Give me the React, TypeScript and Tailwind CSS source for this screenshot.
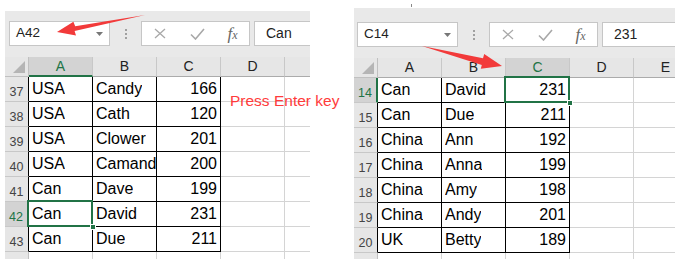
import React from 'react';

type Sheet = {
  name: string;
  value: string;
  cols: string[];
  activeCol: number;
  rows: { n: number; cells: string[] }[];
  activeRow: number;
};

const left: Sheet = {
  name: 'A42',
  value: 'Can',
  cols: ['A', 'B', 'C', 'D', ''],
  activeCol: 0,
  activeRow: 42,
  rows: [
    { n: 37, cells: ['USA', 'Candy', '166'] },
    { n: 38, cells: ['USA', 'Cath', '120'] },
    { n: 39, cells: ['USA', 'Clower', '201'] },
    { n: 40, cells: ['USA', 'Camanda', '200'] },
    { n: 41, cells: ['Can', 'Dave', '199'] },
    { n: 42, cells: ['Can', 'David', '231'] },
    { n: 43, cells: ['Can', 'Due', '211'] },
    { n: 0, cells: [] },
  ],
};

const right: Sheet = {
  name: 'C14',
  value: '231',
  cols: ['A', 'B', 'C', 'D', 'E'],
  activeCol: 2,
  activeRow: 14,
  rows: [
    { n: 14, cells: ['Can', 'David', '231'] },
    { n: 15, cells: ['Can', 'Due', '211'] },
    { n: 16, cells: ['China', 'Ann', '192'] },
    { n: 17, cells: ['China', 'Anna', '199'] },
    { n: 18, cells: ['China', 'Amy', '198'] },
    { n: 19, cells: ['China', 'Andy', '201'] },
    { n: 20, cells: ['UK', 'Betty', '189'] },
    { n: 0, cells: [] },
  ],
};

function Toolbar({ sheet, padTop, nameLeft }: { sheet: Sheet; padTop: string; nameLeft: string }) {
  return (
    <div className={`flex items-start bg-[#e9e9e9] ${padTop}`}>
      <div className={`relative flex h-[25px] w-[101px] shrink-0 items-center border border-[#c6c6c6] bg-white pl-[6px] text-[13.5px] text-[#222] ${nameLeft}`}>
        {sheet.name}
        <svg className="absolute right-[6px] top-[10px]" width="7" height="4" viewBox="0 0 7 4">
          <path d="M0 0h7L3.5 4z" fill="#777" />
        </svg>
      </div>
      <div className="flex h-[25px] w-[31px] shrink-0 flex-col items-center justify-center gap-[2px]">
        <span className="h-[2px] w-[2px] bg-[#a0a0a0]" />
        <span className="h-[2px] w-[2px] bg-[#a0a0a0]" />
        <span className="h-[2px] w-[2px] bg-[#a0a0a0]" />
      </div>
      <div className="flex h-[25px] w-[109px] shrink-0 items-center border border-[#c6c6c6] bg-white">
        <div className="flex w-[36px] justify-center">
          <svg width="12" height="11" viewBox="0 0 12 11">
            <path d="M1 1l10 9M11 1L1 10" stroke="#a8a8a8" strokeWidth="1.3" fill="none" />
          </svg>
        </div>
        <div className="flex w-[38px] justify-center">
          <svg width="15" height="12" viewBox="0 0 15 12">
            <path d="M1 6.5l4.5 4.5L14 1" stroke="#a8a8a8" strokeWidth="1.6" fill="none" />
          </svg>
        </div>
        <div className="flex w-[33px] justify-center font-['Liberation_Serif',serif] text-[17px] italic leading-none text-[#666]">
          f<span className="mt-[4px] text-[12px]">x</span>
        </div>
      </div>
      <div className="ml-[4px] flex h-[25px] w-[200px] shrink-0 items-center border border-[#c6c6c6] bg-white pl-[11px] text-[14px] text-[#222]">
        {sheet.value}
      </div>
    </div>
  );
}

function Grid({ sheet }: { sheet: Sheet }) {
  return (
    <div className="flex flex-col">
      <div className="flex h-[20px]">
        <div className="relative w-[24px] shrink-0 border-r border-b border-[#c0c0c0] bg-[#e6e6e6]">
          <svg className="absolute bottom-[3px] right-[3px]" width="12" height="12" viewBox="0 0 12 12">
            <path d="M12 0v12H0z" fill="#b5b5b5" />
          </svg>
        </div>
        {sheet.cols.map((c, i) => (
          <div
            key={i}
            className={`flex w-[64px] shrink-0 items-center justify-center border-r border-[#c8c8c8] text-[14px] ${
              i === sheet.activeCol
                ? 'border-b-2 border-b-[#217346] bg-[#d3d3d3] text-[#217346]'
                : 'border-b border-b-[#ababab] bg-[#e6e6e6] text-[#222]'
            }`}
          >
            {c}
          </div>
        ))}
      </div>
      {sheet.rows.map((r, ri) => {
        const data = r.cells.length > 0;
        const active = r.n === sheet.activeRow;
        return (
          <div key={ri} className="flex h-[25px]">
            <div
              className={`flex w-[24px] shrink-0 items-end justify-center border-b border-b-[#c8c8c8] pb-[3px] text-[12.5px] leading-none ${
                active
                  ? 'border-r-2 border-r-[#217346] bg-[#d3d3d3] text-[#217346]'
                  : data
                  ? 'border-r border-r-black bg-[#e6e6e6] text-[#444]'
                  : 'border-r border-r-[#c0c0c0] bg-[#e6e6e6] text-[#444]'
              }`}
            >
              {r.n > 0 ? r.n : ''}
            </div>
            {sheet.cols.map((_, ci) => {
              const inData = data && ci < 3;
              const isActive = active && ci === sheet.activeCol;
              return (
                <div
                  key={ci}
                  className={`relative flex w-[64px] shrink-0 items-end border-r border-b pb-[3px] text-[16px] leading-[18px] text-black ${
                    inData ? 'border-black' : 'border-[#d4d4d4]'
                  } ${ci === 2 ? 'justify-end pr-[3px]' : 'pl-[3px]'}`}
                >
                  <span className="overflow-hidden whitespace-nowrap">{inData ? r.cells[ci] : ''}</span>
                  {isActive && (
                    <>
                      <div className="absolute -left-[2px] -top-[2px] -right-[1px] -bottom-[1px] z-10 border-2 border-[#217346]" />
                      <div className="absolute -right-[4px] -bottom-[4px] z-20 h-[6px] w-[6px] border border-white bg-[#217346]" />
                    </>
                  )}
                </div>
              );
            })}
          </div>
        );
      })}
    </div>
  );
}

export default function App() {
  return (
    <div className="relative flex h-[259px] w-[675px] overflow-hidden bg-white font-['Liberation_Sans',Arial,sans-serif]">
      <div className="ml-[5px] mt-[11px] w-[305px] shrink-0 overflow-hidden">
        <Toolbar sheet={left} padTop="pt-[10px] pb-[11px]" nameLeft="ml-[4px]" />
        <Grid sheet={left} />
      </div>
      <div className="ml-[44px] mt-[8px] flex-1 overflow-hidden">
        <Toolbar sheet={right} padTop="pt-[14px] pb-[11px]" nameLeft="ml-[3px]" />
        <Grid sheet={right} />
      </div>

      <div className="absolute left-[230px] top-[89px] text-[15.5px] text-[#ff3b3b]">Press Enter key</div>
      <div className="absolute left-[411px] top-[4px] h-[3px] w-[1px] bg-[#888]" />

      <svg className="pointer-events-none absolute left-0 top-0" width="675" height="259" viewBox="0 0 675 259">
        <path d="M145 15 L75.2 26.2 L73.4 21.7 L57 32 L76 35.5 L74.6 31 Z" fill="#f23a3a" />
        <path d="M422 46 L481.8 65.1 L480.8 68.7 L502 66 L484.2 54.1 L483 58.2 Z" fill="#f23a3a" />
      </svg>
    </div>
  );
}
